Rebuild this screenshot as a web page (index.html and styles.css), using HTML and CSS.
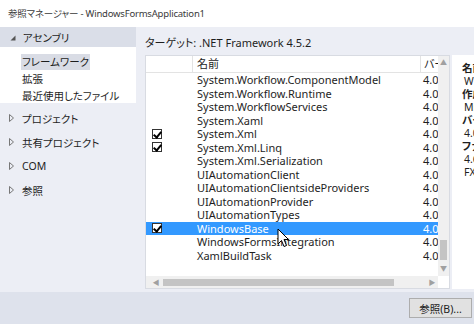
FILE: index.html
```html
<!DOCTYPE html>
<html lang="ja">
<head>
    <meta charset="UTF-8" />
    <title>参照マネージャー</title>
    <link rel="stylesheet" href="styles.css">
</head>
<body>
    <div class="window">
        <div class="titlebar">参照マネージャー - WindowsFormsApplication1</div>

        <div class="main">
            <!-- left navigation -->
            <div class="nav">
                <div class="nav_head">
                    <svg class="tri" width="6" height="6" viewBox="0 0 6 6"><polygon points="5.5,0.5 5.5,5.5 0.5,5.5" fill="#555" /></svg>
                    <span>アセンブリ</span>
                </div>
                <div class="nav_sub">
                    <div class="sub_item selected">フレームワーク</div>
                    <div class="sub_item">拡張</div>
                    <div class="sub_item">最近使用したファイル</div>
                </div>
                <div class="nav_items">
                    <div class="nav_item"><svg class="tri" width="5" height="8" viewBox="0 0 5 8"><polygon points="0.5,0.5 4.5,4 0.5,7.5" fill="none" stroke="#777" /></svg>プロジェクト</div>
                    <div class="nav_item"><svg class="tri" width="5" height="8" viewBox="0 0 5 8"><polygon points="0.5,0.5 4.5,4 0.5,7.5" fill="none" stroke="#777" /></svg>共有プロジェクト</div>
                    <div class="nav_item"><svg class="tri" width="5" height="8" viewBox="0 0 5 8"><polygon points="0.5,0.5 4.5,4 0.5,7.5" fill="none" stroke="#777" /></svg>COM</div>
                    <div class="nav_item"><svg class="tri" width="5" height="8" viewBox="0 0 5 8"><polygon points="0.5,0.5 4.5,4 0.5,7.5" fill="none" stroke="#777" /></svg>参照</div>
                </div>
            </div>

            <!-- assembly list + details -->
            <div class="content">
                <div class="top_row">
                    <span class="target">ターゲット: .NET Framework 4.5.2</span>
                    <div class="search">アセンブリの検索</div>
                </div>

                <div class="body_row">
                    <div class="list">
                        <div class="table">
                            <div class="row head">
                                <div class="c_check"></div>
                                <div class="c_name">名前</div>
                                <div class="c_ver">バージョン</div>
                            </div>
                            <div class="row"><div class="c_check"></div><div class="c_name">System.Workflow.ComponentModel</div><div class="c_ver">4.0</div></div>
                            <div class="row"><div class="c_check"></div><div class="c_name">System.Workflow.Runtime</div><div class="c_ver">4.0</div></div>
                            <div class="row"><div class="c_check"></div><div class="c_name">System.WorkflowServices</div><div class="c_ver">4.0</div></div>
                            <div class="row"><div class="c_check"></div><div class="c_name">System.Xaml</div><div class="c_ver">4.0</div></div>
                            <div class="row"><div class="c_check"><span class="box checked"></span></div><div class="c_name">System.Xml</div><div class="c_ver">4.0</div></div>
                            <div class="row"><div class="c_check"><span class="box checked"></span></div><div class="c_name">System.Xml.Linq</div><div class="c_ver">4.0</div></div>
                            <div class="row"><div class="c_check"></div><div class="c_name">System.Xml.Serialization</div><div class="c_ver">4.0</div></div>
                            <div class="row"><div class="c_check"></div><div class="c_name">UIAutomationClient</div><div class="c_ver">4.0</div></div>
                            <div class="row"><div class="c_check"></div><div class="c_name">UIAutomationClientsideProviders</div><div class="c_ver">4.0</div></div>
                            <div class="row"><div class="c_check"></div><div class="c_name">UIAutomationProvider</div><div class="c_ver">4.0</div></div>
                            <div class="row"><div class="c_check"></div><div class="c_name">UIAutomationTypes</div><div class="c_ver">4.0</div></div>
                            <div class="row active"><div class="c_check"><span class="box checked"></span></div><div class="c_name">WindowsBase</div><div class="c_ver">4.0</div></div>
                            <div class="row"><div class="c_check"></div><div class="c_name">WindowsFormsIntegration</div><div class="c_ver">4.0</div></div>
                            <div class="row"><div class="c_check"></div><div class="c_name">XamlBuildTask</div><div class="c_ver">4.0</div></div>
                        </div>

                        <div class="vscroll">
                            <span class="arrow">&#9650;</span>
                            <span class="track"></span>
                            <span class="thumb"></span>
                            <span class="arrow down">&#9660;</span>
                        </div>

                        <div class="hscroll">
                            <span class="arrow">&#9664;</span>
                            <span class="thumb"></span>
                            <span class="track"></span>
                            <span class="arrow">&#9654;</span>
                        </div>
                        <div class="corner"></div>
                    </div>

                    <div class="details">
                        <div class="label">名前:</div>
                        <div class="value">WindowsBase</div>
                        <div class="label">作成者:</div>
                        <div class="value">Microsoft Corporation</div>
                        <div class="label">バージョン:</div>
                        <div class="value">4.0.0.0</div>
                        <div class="label">ファイルのバージョン:</div>
                        <div class="value">4.6.81.0 built by:</div>
                        <div class="value">FX452RTMGDR</div>
                    </div>
                </div>
            </div>
        </div>

        <div class="footer">
            <button type="button">参照(B)...</button>
        </div>

        <!-- mouse pointer over the list -->
        <svg class="cursor" width="13" height="21" viewBox="0 0 13 21">
            <path d="M1 1 L1 16 L4.5 12.5 L7 18.5 L9.5 17.5 L7 11.5 L11.5 11.5 Z" fill="#fff" stroke="#000" stroke-width="1" stroke-linejoin="round" />
        </svg>
    </div>
</body>
</html>
```

FILE: styles.css
```css
/* Reset and base font */
* {
    margin: 0;
    padding: 0;
    box-sizing: border-box;
    font-family: "Noto Sans", "Noto Sans CJK JP", sans-serif;
    font-feature-settings: "palt";
}

body {
    width: 474px;
    height: 324px;
    overflow: hidden;
    background: #eceef5;
    color: #1e1e1e;
    font-size: 11px;
}

.window {
    position: relative;
    width: 474px;
    height: 324px;
    display: flex;
    flex-direction: column;
}

/* Title bar */
.titlebar {
    height: 27px;
    line-height: 27px;
    padding-left: 8px;
    background: #ffffff;
    color: #3a3a3a;
    font-size: 9.5px;
    letter-spacing: -0.2px;
    white-space: nowrap;
}

.main {
    height: 265px;
    display: flex;
    background: #eceef5;
}

/* Left navigation */
.nav {
    width: 136px;
    flex-shrink: 0;
    font-size: 10.5px;
    white-space: nowrap;
}

.nav_head {
    height: 20px;
    display: flex;
    align-items: center;
    gap: 7px;
    padding-left: 10px;
    background: #dadee8;
}

.nav_head .tri {
    margin-top: 1px;
}

.nav_sub {
    height: 56px;
    background: #ffffff;
    padding: 7px 0 0 21px;
    display: flex;
    flex-direction: column;
    align-items: flex-start;
    gap: 1px;
}

.sub_item {
    height: 16px;
    line-height: 16px;
    padding: 0 1px;
}

.sub_item.selected {
    background: #d9dce5;
}

.nav_items {
    padding-top: 3px;
}

.nav_item {
    height: 24px;
    display: flex;
    align-items: center;
    gap: 8px;
    padding-left: 9px;
}

/* Content area */
.content {
    flex: 1;
    padding-left: 9px;
    display: flex;
    flex-direction: column;
}

.top_row {
    height: 28px;
    display: flex;
    align-items: center;
    justify-content: space-between;
}

.target {
    font-size: 11px;
    margin-top: 2px;
}

.search {
    width: 20px;
    height: 17px;
    margin-top: 6px;
    background: #ffffff;
    border: 1px solid #cfd2da;
    border-right: none;
    color: #7a7a7a;
    font-size: 10.5px;
    line-height: 15px;
    padding-left: 2px;
    white-space: nowrap;
    overflow: hidden;
}

.body_row {
    height: 234px;
    display: flex;
    gap: 2px;
}

/* Assembly list */
.list {
    width: 305px;
    background: #ffffff;
    border: 1px solid #d8dbe2;
    display: grid;
    grid-template-columns: 1fr 11px;
    grid-template-rows: 1fr 12px;
}

.table {
    overflow: hidden;
}

.row {
    height: 13.5px;
    display: flex;
    align-items: center;
    white-space: nowrap;
}

.row.head {
    height: 17px;
    border-bottom: 1px solid #e3e3e3;
}

.row.head .c_check,
.row.head .c_name {
    border-right: 1px solid #e3e3e3;
    height: 100%;
}

.row.head .c_name {
    padding-left: 4px;
    line-height: 16px;
}

.row.head .c_ver {
    line-height: 16px;
    padding-left: 3px;
}

.row.active {
    background: #3399ff;
    color: #ffffff;
}

.c_check {
    width: 47px;
    flex-shrink: 0;
    padding-left: 6px;
    display: flex;
    align-items: center;
}

.c_name {
    width: 228px;
    flex-shrink: 0;
    padding-left: 4px;
    overflow: hidden;
}

.c_ver {
    width: 18px;
    flex-shrink: 0;
    overflow: hidden;
    padding-left: 2px;
}

.box {
    width: 10px;
    height: 10px;
    border: 1px solid #333;
    background: #ffffff;
    position: relative;
}

.box.checked::after {
    content: '';
    position: absolute;
    left: 2px;
    top: 0;
    width: 3px;
    height: 6px;
    border-right: 2px solid #000;
    border-bottom: 2px solid #000;
    transform: rotate(40deg);
}

/* Scrollbars */
.vscroll {
    background: #f0f0f0;
    display: flex;
    flex-direction: column;
    align-items: center;
}

.vscroll .arrow {
    height: 14px;
    line-height: 14px;
    font-size: 7px;
    color: #a0a0a0;
}

.vscroll .track {
    flex: 1;
}

.vscroll .thumb {
    width: 7px;
    height: 20px;
    background: #c4c4c4;
}

.vscroll .arrow.down {
    margin-top: 2px;
}

.hscroll {
    background: #f0f0f0;
    display: flex;
    align-items: center;
    padding-left: 4px;
}

.hscroll .arrow {
    width: 12px;
    font-size: 7px;
    color: #a0a0a0;
    text-align: center;
}

.hscroll .thumb {
    width: 231px;
    height: 7px;
    background: #c4c4c4;
    margin-left: 1px;
}

.hscroll .track {
    flex: 1;
}

.corner {
    background: #ffffff;
}

/* Details panel */
.details {
    flex: 1;
    background: #ffffff;
    padding: 7px 0 0 10px;
    white-space: nowrap;
    overflow: hidden;
    font-size: 10.5px;
}

.details .label,
.details .value {
    height: 13px;
    line-height: 13px;
}

.details .label {
    font-weight: bold;
}

.details .value {
    padding-left: 2px;
}

/* Footer */
.footer {
    flex: 1;
    background: #dee2ec;
    padding: 6px 0 0 409px;
}

.footer button {
    width: 63px;
    height: 20px;
    background: #e1e1e1;
    border: 1px solid #adadad;
    color: #222;
    font-size: 10.5px;
}

.cursor {
    position: absolute;
    left: 277px;
    top: 228px;
}
```
